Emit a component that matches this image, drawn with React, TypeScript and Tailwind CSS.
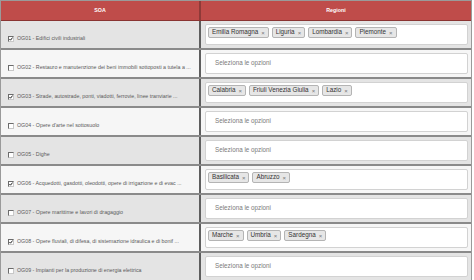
import React from "react";

type Row = { code: string; checked?: boolean; tags?: string[] };

const rows: Row[] = [
  { code: "OG01 - Edifici civili industriali", checked: true, tags: ["Emilia Romagna", "Liguria", "Lombardia", "Piemonte"] },
  { code: "OG02 - Restauro e manutenzione dei beni immobili sottoposti a tutela a ..." },
  { code: "OG03 - Strade, autostrade, ponti, viadotti, ferrovie, linee tranviarie ...", checked: true, tags: ["Calabria", "Friuli Venezia Giulia", "Lazio"] },
  { code: "OG04 - Opere d'arte nel sottosuolo" },
  { code: "OG05 - Dighe" },
  { code: "OG06 - Acquedotti, gasdotti, oleodotti, opere di irrigazione e di evac ...", checked: true, tags: ["Basilicata", "Abruzzo"] },
  { code: "OG07 - Opere marittime e lavori di dragaggio" },
  { code: "OG08 - Opere fluviali, di difesa, di sistemazione idraulica e di bonif ...", checked: true, tags: ["Marche", "Umbria", "Sardegna"] },
  { code: "OG09 - Impianti per la produzione di energia elettrica" },
];

function Check({ checked }: { checked?: boolean }) {
  return (
    <span className="relative inline-block w-[6px] h-[6px] shrink-0 bg-white border border-[#6b6b6b] border-r-[#c8c8c8] border-b-[#c8c8c8]">
      {checked && (
        <svg viewBox="0 0 6 6" className="absolute left-0 top-0 w-[4px] h-[4px]">
          <path d="M0.6 3 L2.3 4.8 L5.4 0.8" fill="none" stroke="#111" strokeWidth="1.4" />
        </svg>
      )}
    </span>
  );
}

export default function App() {
  return (
    <div className="w-[474px] h-[280px] overflow-hidden bg-white" style={{ fontFamily: '"Liberation Sans", Arial, sans-serif' }}>
      <div className="w-[472px] border-l border-t border-r border-[#9a9a9a]">
        <div className="flex h-[20px] bg-[#bf4c4a] border-b border-[#8a3432]">
          <div className="w-[200px] shrink-0 border-r-2 border-[#8e3a38] flex items-center justify-center text-white font-bold text-[5.3px]">
            SOA
          </div>
          <div className="flex-1 flex items-center justify-center text-white font-bold text-[5.3px]">Regioni</div>
        </div>
        {rows.map((r, i) => (
          <div
            key={r.code}
            className={`flex h-[29px] border-b-2 border-[#8a8a8a] ${i % 2 === 0 ? "bg-[#e4e4e4]" : "bg-[#f6f6f6]"}`}
          >
            <div className="w-[200px] shrink-0 border-r-2 border-[#5e5e5e] flex items-center pl-[7px] pt-[9px] gap-[3px]">
              <Check checked={r.checked} />
              <span className="whitespace-nowrap text-[5.3px] text-[#5a5a5a] leading-none">{r.code}</span>
            </div>
            <div className="flex-1 min-w-0 pl-[4px] pr-[3px] pt-[3px]">
              <div className="h-[21px] bg-white border border-[#d2d2d2] rounded-[2px]">
                {r.tags ? (
                  <div className="flex gap-[3px] pl-[2px] pt-[2px]">
                    {r.tags.map((t) => (
                      <span
                        key={t}
                        className="h-[11px] flex items-center gap-[3px] px-[3px] bg-[#e6e6e6] border border-[#b4b4b4] rounded-[2px] text-[6.3px] text-[#333] leading-none whitespace-nowrap"
                      >
                        {t}
                        <span className="text-[#777] text-[6px]">×</span>
                      </span>
                    ))}
                  </div>
                ) : (
                  <div className="h-full flex items-center pl-[9px] text-[6.3px] text-[#7a7a7a] leading-none">
                    Seleziona le opzioni
                  </div>
                )}
              </div>
            </div>
          </div>
        ))}
      </div>
    </div>
  );
}
